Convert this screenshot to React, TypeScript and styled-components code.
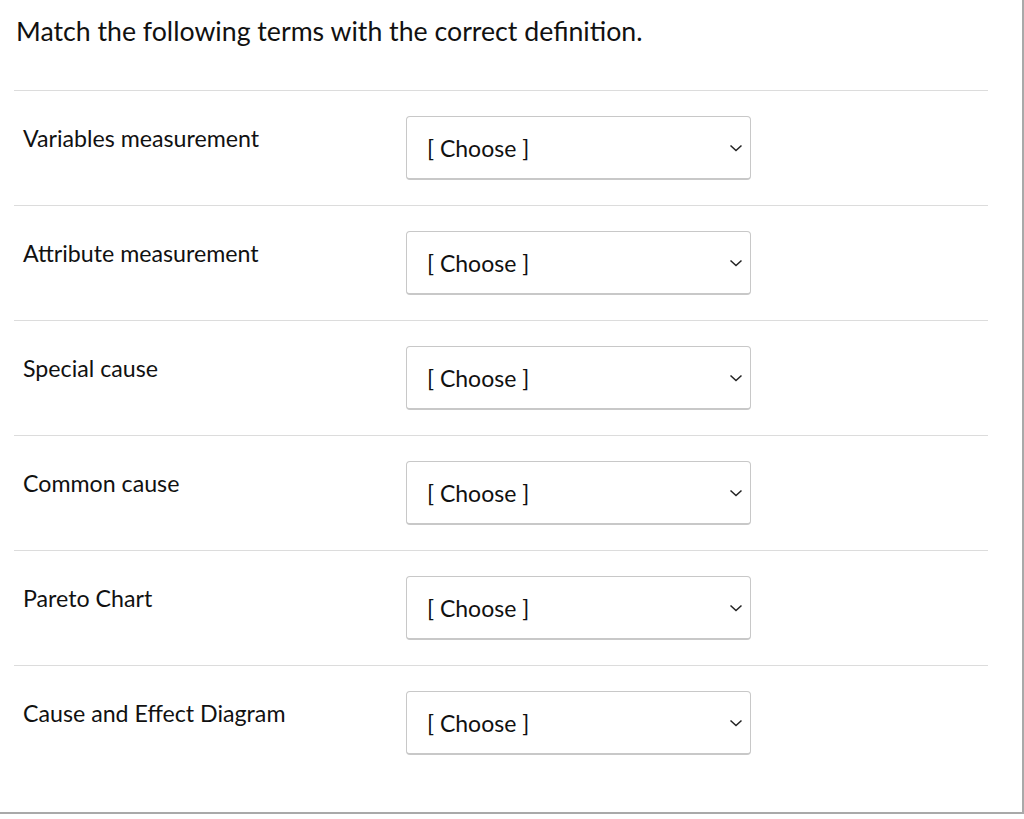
import React from 'react';
import styled, { createGlobalStyle } from 'styled-components';

const GlobalStyle = createGlobalStyle`
  html, body {
    margin: 0;
    padding: 0;
    background: #ffffff;
  }
  body {
    font-family: Lato, "Open Sans", sans-serif;
    color: #2d3b45;
  }
`;

const Frame = styled.div`
  box-sizing: border-box;
  width: 1024px;
  height: 814px;
  border-right: 2px solid #a9a9a9;
  border-bottom: 2px solid #a9a9a9;
  background: #fff;
  padding: 0 34px 0 14px;
`;

const Question = styled.div`
  box-sizing: border-box;
  font-size: 26.7px;
  color: #111;
  padding: 14px 0 0 2px;
  height: 90px;
  line-height: 34px;
`;

const Row = styled.div`
  display: flex;
  align-items: flex-start;
  border-top: 1px solid #dcdcdc;
  padding: 25px 0;
  height: 115px;
  box-sizing: border-box;
`;

const Term = styled.div`
  width: 392px;
  padding: 8px 0 0 9px;
  font-size: 23.2px;
  line-height: 28px;
  color: #111;
  box-sizing: border-box;
`;

const SelectBox = styled.div`
  box-sizing: border-box;
  width: 345px;
  height: 64px;
  border: 1px solid #c8c8c8;
  border-bottom: 2px solid #c8c8c8;
  border-radius: 4px;
  display: flex;
  align-items: center;
  justify-content: space-between;
  padding: 0 7px 0 20px;
  font-size: 23px;
  color: #111;
`;

const Chevron = styled.svg`
  width: 14px;
  height: 14px;
  margin-top: 1px;
`;

const terms = [
  'Variables measurement',
  'Attribute measurement',
  'Special cause',
  'Common cause',
  'Pareto Chart',
  'Cause and Effect Diagram',
];

export default function App() {
  return (
    <>
      <GlobalStyle />
      <Frame>
        <Question>Match the following terms with the correct definition.</Question>
        {terms.map((t) => (
          <Row key={t}>
            <Term>{t}</Term>
            <SelectBox>
              <span>[ Choose ]</span>
              <Chevron viewBox="0 0 14 14">
                <path d="M1.5 4.5 L7 9.5 L12.5 4.5" fill="none" stroke="#222" strokeWidth="1.5" />
              </Chevron>
            </SelectBox>
          </Row>
        ))}
      </Frame>
    </>
  );
}
